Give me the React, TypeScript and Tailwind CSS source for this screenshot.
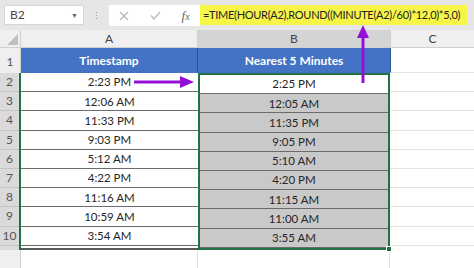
const rows = [
  ["2:23 PM", "2:25 PM"],
  ["12:06 AM", "12:05 AM"],
  ["11:33 PM", "11:35 PM"],
  ["9:03 PM", "9:05 PM"],
  ["5:12 AM", "5:10 AM"],
  ["4:22 PM", "4:20 PM"],
  ["11:16 AM", "11:15 AM"],
  ["10:59 AM", "11:00 AM"],
  ["3:54 AM", "3:55 AM"],
];

export default function App() {
  return (
    <div className="relative w-[474px] h-[268px] overflow-hidden bg-white font-['Lato','Open_Sans',sans-serif] text-[#262626]">
      {/* formula bar */}
      <div className="flex h-[30px] items-start bg-[#e6e6e6] pt-[5px]">
        <div className="ml-[4px] flex h-[20px] w-[80px] items-center justify-between border border-[#d6d6d6] bg-white pl-[5px] pr-[5px] text-[12px] text-[#444]">
          <span>B2</span>
          <span className="text-[7px] text-[#666]">▼</span>
        </div>
        <div className="flex w-[25px] flex-col items-center gap-[2px] pt-[7px]">
          <span className="h-[1px] w-[1px] bg-[#999]" />
          <span className="h-[1px] w-[1px] bg-[#999]" />
          <span className="h-[1px] w-[1px] bg-[#999]" />
        </div>
        <div className="flex h-[21px] w-[91px] items-center justify-around bg-white text-[#b5b5b5]">
          <svg width="10" height="10" viewBox="0 0 10 10">
            <path d="M1 1L9 9M9 1L1 9" stroke="#b8b8b8" strokeWidth="1.2" />
          </svg>
          <svg width="11" height="9" viewBox="0 0 11 9">
            <path d="M1 4.5L4 8L10 1" stroke="#b8b8b8" strokeWidth="1.2" fill="none" />
          </svg>
          <span className="font-['Liberation_Serif',serif] text-[13px] italic text-[#666]">
            f<span className="text-[10px]">x</span>
          </span>
        </div>
        <div className="flex h-[20px] w-[267px] items-center overflow-hidden whitespace-nowrap bg-[#f7f547] pl-[3px] text-[11px] tracking-[-0.3px] text-[#222]">
          =TIME(HOUR(A2),ROUND((MINUTE(A2)/60)*12,0)*5,0)
        </div>
      </div>

      {/* column headers */}
      <div className="flex h-[18px] border-b border-[#d0d0d0] bg-[#efefef] text-[12px] text-[#444]">
        <div className="relative w-[21px] border-r border-[#d0d0d0]">
          <svg className="absolute bottom-[2px] right-[2px]" width="11" height="11" viewBox="0 0 11 11">
            <path d="M11 0V11H0Z" fill="#bfbfbf" />
          </svg>
        </div>
        <div className="flex w-[177px] items-center justify-center border-r border-[#d0d0d0]">A</div>
        <div className="flex w-[192px] items-center justify-center bg-[#d4d4d4]">B</div>
        <div className="flex flex-1 items-center justify-center border-l border-[#d0d0d0]">C</div>
      </div>

      {/* row 1 */}
      <div className="flex h-[25px]">
        <div className="flex w-[21px] items-end justify-center border-r border-[#d0d0d0] bg-[#efefef] pb-[2px] text-[12px] text-[#555]">1</div>
        <div className="flex w-[177px] items-center justify-center border-r border-[#2f528f] bg-[#4472c4] text-[12px] font-bold text-white">
          Timestamp
        </div>
        <div className="flex w-[192px] items-center justify-center bg-[#4472c4] text-[12px] font-bold text-white">
          Nearest 5 Minutes
        </div>
        <div className="flex-1 border-b border-[#e2e2e2] border-l border-l-[#2f528f]" />
      </div>

      {/* data rows */}
      <div className="flex">
        <div className="w-[21px] border-r-2 border-[#217346] bg-[#dadada] text-[12px] text-[#555]">
          {rows.map((_, i) => (
            <div key={i} className="flex h-[19.2px] items-center justify-center border-b border-[#c4c4c4]">
              {i + 2}
            </div>
          ))}
        </div>
        <div className="w-[177px] border-b-2 border-[#595959] text-[11.5px]">
          {rows.map((r, i) => (
            <div key={i} className="flex h-[19.2px] items-center justify-center border-b border-[#6b6b6b] bg-white">
              {r[0]}
            </div>
          ))}
        </div>
        <div className="relative w-[192px] border-2 border-[#217346] text-[11.5px]">
          {rows.map((r, i) => (
            <div
              key={i}
              className={
                i === 0
                  ? "flex h-[19.2px] items-center justify-center border-b border-[#6b6b6b] bg-white"
                  : "flex h-[19.2px] items-center justify-center border-b border-[#6b6b6b] bg-[#c9c9c9]"
              }
            >
              {r[1]}
            </div>
          ))}
          <div className="absolute -bottom-[4px] -right-[4px] h-[6px] w-[6px] border border-white bg-[#217346]" />
        </div>
        <div className="flex-1">
          {rows.map((_, i) => (
            <div key={i} className="h-[19.2px] border-b border-[#e2e2e2]" />
          ))}
        </div>
      </div>

      {/* row 11 */}
      <div className="flex h-[24px]">
        <div className="w-[21px] border-r border-[#d0d0d0] bg-[#efefef]" />
        <div className="w-[177px] border-r border-[#e2e2e2]" />
        <div className="w-[192px] border-r border-[#e2e2e2]" />
        <div className="flex-1" />
      </div>

      {/* arrows */}
      <svg className="absolute left-0 top-0" width="474" height="268" viewBox="0 0 474 268">
        <path d="M134 82H182" stroke="#9410d6" strokeWidth="3" />
        <path d="M180 76L194 82L180 88Z" fill="#9410d6" />
        <path d="M363 83V36" stroke="#9410d6" strokeWidth="3" />
        <path d="M357 38L363 25L369 38Z" fill="#9410d6" />
      </svg>
    </div>
  );
}
